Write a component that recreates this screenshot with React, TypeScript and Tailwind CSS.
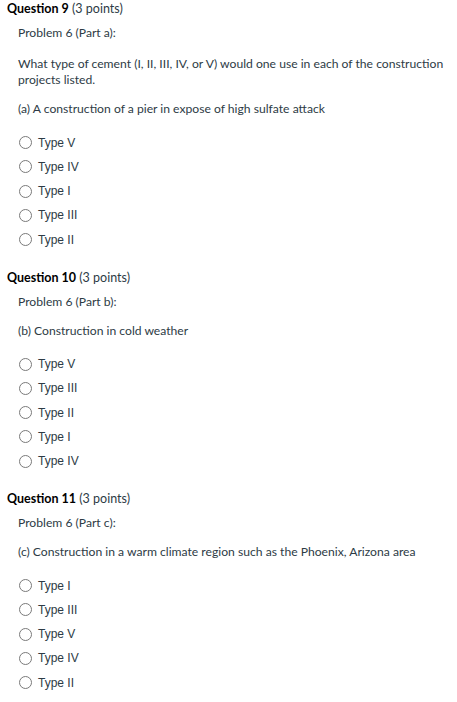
import React from "react";

type Q = {
  num: number;
  part: string;
  intro?: string;
  prompt: string;
  options: string[];
};

const questions: Q[] = [
  {
    num: 9,
    part: "Problem 6 (Part a):",
    intro:
      "What type of cement (I, II, III, IV, or V) would one use in each of the construction projects listed.",
    prompt: "(a) A construction of a pier in expose of high sulfate attack",
    options: ["Type V", "Type IV", "Type I", "Type III", "Type II"],
  },
  {
    num: 10,
    part: "Problem 6 (Part b):",
    prompt: "(b) Construction in cold weather",
    options: ["Type V", "Type III", "Type II", "Type I", "Type IV"],
  },
  {
    num: 11,
    part: "Problem 6 (Part c):",
    prompt: "(c) Construction in a warm climate region such as the Phoenix, Arizona area",
    options: ["Type I", "Type III", "Type V", "Type IV", "Type II"],
  },
];

function Question({ q }: { q: Q }) {
  return (
    <div className="pb-[22px]">
      <div className="text-[12.5px] leading-[18px] text-black">
        <span className="font-bold">Question {q.num}</span>{" "}
        <span className="text-[#2d3b45]">(3 points)</span>
      </div>
      <div className="pl-[11px] pt-[7px] text-[12.15px] leading-[16px] text-[#2d3b45]">
        <p>{q.part}</p>
        {q.intro && <p className="mt-[15px]">{q.intro}</p>}
        <p className="mt-[13px]">{q.prompt}</p>
        <div
          className="mt-[18.5px] flex flex-col gap-[10.25px]"
          style={{ fontFamily: '"Liberation Sans", Arial, sans-serif' }}
        >
          {q.options.map((o) => (
            <div key={o} className="flex items-center h-[14px]">
              <span className="ml-[1px] w-[13px] h-[13px] rounded-full border border-[#7a7a7a] bg-white shrink-0" />
              <span className="ml-[6px] text-[12px] text-[#2d3b45]">{o}</span>
            </div>
          ))}
        </div>
      </div>
    </div>
  );
}

export default function App() {
  return (
    <div
      className="w-[457px] h-[702px] bg-white pl-[7px] pt-0 overflow-hidden"
      style={{ fontFamily: 'Lato, "Liberation Sans", sans-serif' }}
    >
      {questions.map((q) => (
        <Question key={q.num} q={q} />
      ))}
    </div>
  );
}
